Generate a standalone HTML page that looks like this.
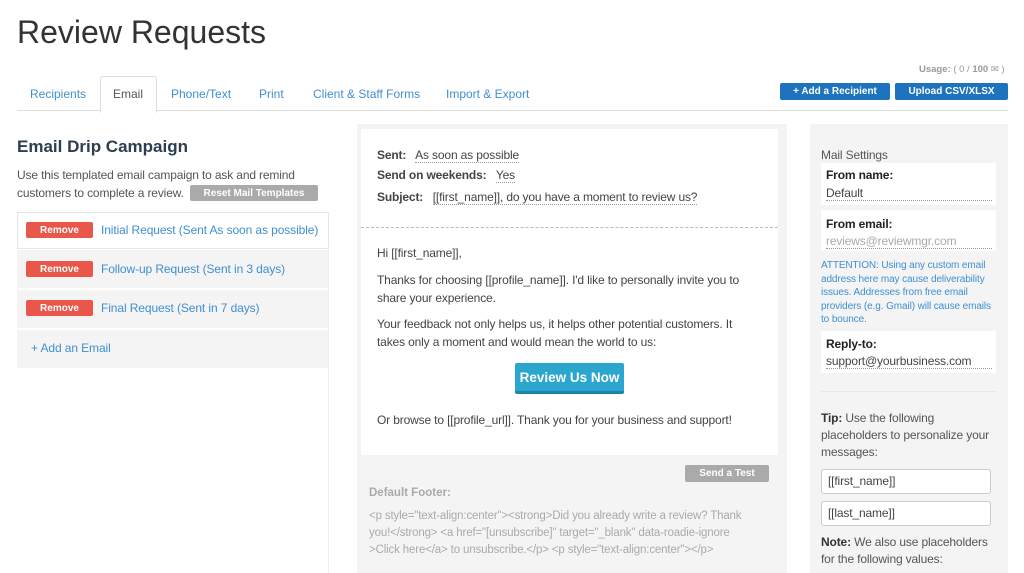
<!DOCTYPE html><html><head><style>
body{margin:0;width:1024px;height:573px;overflow:hidden;background:#fff;font-family:"Liberation Sans",sans-serif;color:#333;position:relative}
.a{position:absolute;white-space:nowrap}
.tab{position:absolute;top:87px;font-size:12px;color:#3f8fd2}
.btn{position:absolute;color:#fff;font-weight:bold;font-size:10px;display:flex;align-items:center;justify-content:center;border-radius:2px}
.rm{position:absolute;left:26px;width:67px;height:16px;background:#e9574a;color:#fff;font-weight:bold;font-size:10px;display:flex;align-items:center;justify-content:center;border-radius:2px}
.lk{position:absolute;left:101px;font-size:12px;color:#3f8fd2;letter-spacing:-0.1px}
.t{font-size:12px;color:#444;letter-spacing:-0.15px}
.dot{border-bottom:1px dotted #999}
.box{position:absolute;left:821px;width:175px;background:#fff}
</style></head><body>
<div class="a" style="left:17px;top:14px;font-size:32px;color:#333">Review Requests</div>
<div class="a" style="left:919px;top:64px;font-size:9.5px;color:#999"><b>Usage:</b> ( 0 / <b>100</b> ✉ )</div>
<div class="btn" style="left:780px;top:83px;width:110px;height:17px;background:#1e73be">+ Add a Recipient</div>
<div class="btn" style="left:895px;top:83px;width:113px;height:17px;background:#1e73be">Upload CSV/XLSX</div>
<div style="position:absolute;left:17px;top:110px;width:991px;border-top:1px solid #ddd"></div>
<div style="position:absolute;left:100px;top:76px;width:55px;height:35px;border:1px solid #ddd;border-bottom:1px solid #fff;border-radius:3px 3px 0 0;background:#fff"></div>
<div class="tab" style="left:30px">Recipients</div>
<div class="tab" style="left:113px;color:#555">Email</div>
<div class="tab" style="left:171px">Phone/Text</div>
<div class="tab" style="left:259px">Print</div>
<div class="tab" style="left:313px">Client &amp; Staff Forms</div>
<div class="tab" style="left:446px">Import &amp; Export</div>

<div class="a" style="left:17px;top:137px;font-size:17px;font-weight:bold;color:#2c3e50">Email Drip Campaign</div>
<div class="a t" style="left:17px;top:166px;line-height:18px;color:#555">Use this templated email campaign to ask and remind<br>customers to complete a review.</div>
<div class="btn" style="left:190px;top:185px;width:128px;height:16px;background:#aaa">Reset Mail Templates</div>
<div style="position:absolute;left:17px;top:212px;width:310px;height:35px;border:1px solid #e6e6e6;background:#fff"></div>
<div style="position:absolute;left:17px;top:250px;width:311px;height:38px;background:#f4f4f4"></div>
<div style="position:absolute;left:17px;top:290px;width:311px;height:38px;background:#f4f4f4"></div>
<div style="position:absolute;left:17px;top:330px;width:311px;height:38px;background:#f4f4f4"></div>
<div style="position:absolute;left:328px;top:247px;height:326px;border-left:1px solid #eee"></div>
<div class="rm" style="top:222px">Remove</div><div class="lk" style="top:223px">Initial Request (Sent As soon as possible)</div>
<div class="rm" style="top:261px">Remove</div><div class="lk" style="top:262px">Follow-up Request (Sent in 3 days)</div>
<div class="rm" style="top:300px">Remove</div><div class="lk" style="top:301px">Final Request (Sent in 7 days)</div>
<div class="lk" style="left:31px;top:341px">+ Add an Email</div>

<div style="position:absolute;left:357px;top:124px;width:430px;height:449px;background:#f4f4f4"></div>
<div style="position:absolute;left:361px;top:129px;width:417px;height:326px;background:#fff"></div>
<div style="position:absolute;left:361px;top:227px;width:417px;border-top:1px dashed #bbb"></div>
<div class="a t" style="left:377px;top:148px"><b>Sent:</b> &nbsp; <span class="dot">As soon as possible</span></div>
<div class="a t" style="left:377px;top:168px"><b>Send on weekends:</b> &nbsp; <span class="dot">Yes</span></div>
<div class="a t" style="left:377px;top:190px"><b>Subject:</b> &nbsp; <span class="dot">[[first_name]], do you have a moment to review us?</span></div>
<div class="a t" style="left:377px;top:246px">Hi [[first_name]],</div>
<div class="a t" style="left:377px;top:271px;line-height:18px">Thanks for choosing [[profile_name]]. I'd like to personally invite you to<br>share your experience.</div>
<div class="a t" style="left:377px;top:315px;line-height:18px">Your feedback not only helps us, it helps other potential customers. It<br>takes only a moment and would mean the world to us:</div>
<div class="btn" style="left:515px;top:363px;width:109px;height:28px;font-size:13.5px;background:#2aa6cf;border-bottom:3px solid #1b86a8">Review Us Now</div>
<div class="a t" style="left:377px;top:413px">Or browse to [[profile_url]]. Thank you for your business and support!</div>
<div class="btn" style="left:685px;top:465px;width:84px;height:17px;background:#aaa">Send a Test</div>
<div class="a" style="left:369px;top:487px;font-size:11.5px;font-weight:bold;color:#aaa">Default Footer:</div>
<div class="a" style="left:369px;top:508px;font-size:11.5px;line-height:17px;color:#aaa;letter-spacing:-0.15px">&lt;p style="text-align:center"&gt;&lt;strong&gt;Did you already write a review? Thank<br>you!&lt;/strong&gt; &lt;a href="[unsubscribe]" target="_blank" data-roadie-ignore<br>&gt;Click here&lt;/a&gt; to unsubscribe.&lt;/p&gt; &lt;p style="text-align:center"&gt;&lt;/p&gt;</div>

<div style="position:absolute;left:810px;top:124px;width:198px;height:449px;background:#f4f4f4"></div>
<div class="a t" style="left:821px;top:148px;color:#555">Mail Settings</div>
<div class="box" style="top:163px;height:42px"></div>
<div class="a t" style="left:826px;top:168px;color:#222"><b>From name:</b></div>
<div class="a t" style="left:826px;top:186px"><span class="dot" style="display:inline-block;width:166px">Default</span></div>
<div class="box" style="top:210px;height:41px"></div>
<div class="a t" style="left:826px;top:217px;color:#222"><b>From email:</b></div>
<div class="a t" style="left:826px;top:234px;color:#aaa"><span class="dot" style="display:inline-block;width:166px">reviews@reviewmgr.com</span></div>
<div class="a" style="left:821px;top:259px;font-size:10px;line-height:13.5px;color:#3f8fd2;letter-spacing:-0.1px">ATTENTION: Using any custom email<br>address here may cause deliverability<br>issues. Addresses from free email<br>providers (e.g. Gmail) will cause emails<br>to bounce.</div>
<div class="box" style="top:331px;height:42px"></div>
<div class="a t" style="left:826px;top:337px;color:#222"><b>Reply-to:</b></div>
<div class="a t" style="left:826px;top:354px"><span class="dot" style="display:inline-block;width:166px">support@yourbusiness.com</span></div>
<div style="position:absolute;left:821px;top:391px;width:175px;border-top:1px solid #e6e6e6"></div>
<div class="a t" style="left:821px;top:410px;line-height:17px;color:#555"><b style="color:#333">Tip:</b> Use the following<br>placeholders to personalize your<br>messages:</div>
<div style="position:absolute;left:821px;top:469px;width:168px;height:23px;border:1px solid #ccc;border-radius:3px;background:#fff"></div>
<div class="a t" style="left:828px;top:474px">[[first_name]]</div>
<div style="position:absolute;left:821px;top:501px;width:168px;height:23px;border:1px solid #ccc;border-radius:3px;background:#fff"></div>
<div class="a t" style="left:828px;top:506px">[[last_name]]</div>
<div class="a t" style="left:821px;top:534px;line-height:17px;color:#555"><b style="color:#333">Note:</b> We also use placeholders<br>for the following values:</div>
</body></html>
